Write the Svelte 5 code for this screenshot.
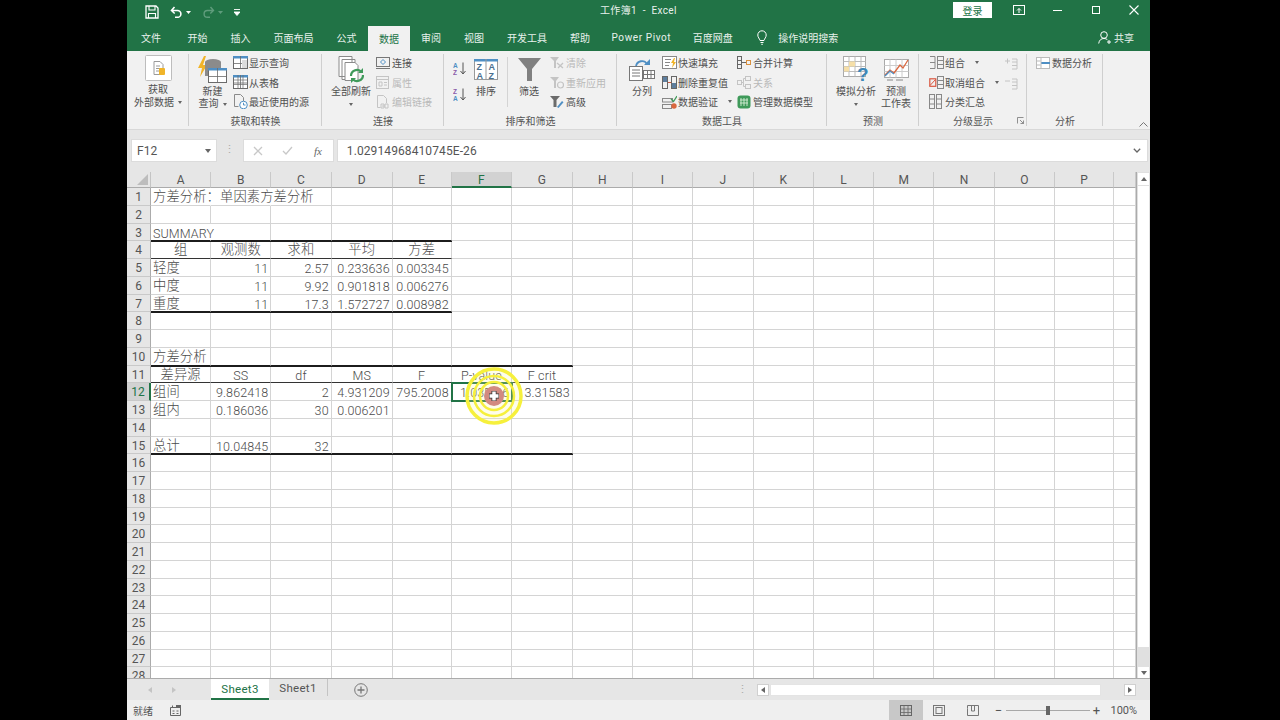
<script>
  const s = (w, h, b) => `<svg width="${w}" height="${h}" viewBox="0 0 ${w} ${h}" fill="none" xmlns="http://www.w3.org/2000/svg">${b}</svg>`;
  const G = '#6b6b6b', D = '#c4c4c4', B = '#4f8fc4', Y = '#f0b429', GR = '#3f9a5a';
  const table = (x, y, w, h, c = G, head = B) => `<rect x="${x + .5}" y="${y + .5}" width="${w - 1}" height="${h - 1}" stroke="${c}" fill="#fff"/><rect x="${x}" y="${y}" width="${w}" height="2.5" fill="${head}"/><path d="M${x} ${y + h / 2 + 1}H${x + w}M${x + w / 2} ${y}V${y + h}" stroke="${c}" stroke-width=".8"/>`;
  const icons = {
    save: s(14, 14, `<path d="M1 1h10l2 2v10H1z" stroke="#fff" stroke-width="1.3"/><path d="M4 1v4h6V1M3.5 13V8.5h7V13" stroke="#fff" stroke-width="1.1"/>`),
    undo: s(13, 12, `<path d="M4.5 1L1.5 4.5l3.2 3M2 4.5h5.5a3.4 3.4 0 0 1 0 6.8H5" stroke="#fff" stroke-width="1.6"/>`),
    redo: s(13, 12, `<path d="M8.5 1l3 3.5-3.2 3M11 4.5H5.5a3.4 3.4 0 0 0 0 6.8H8" stroke="#5f9c7c" stroke-width="1.4"/>`),
    caretw: s(5, 3, `<path d="M0 0h5L2.500 3z" fill="#fff"/>`),
    caretd: s(5, 3, `<path d="M0 0h5L2.500 3z" fill="#5f9c7c"/>`),
    custom: s(6, 7, `<path d="M0 .5h6M0 3h6L3 6.500z" stroke="#fff" stroke-width=".9" fill="#fff"/>`),
    display: s(12, 10, `<rect x=".5" y=".5" width="11" height="9" stroke="#fff"/><path d="M6 8V3.500M4 5.500l2-2 2 2" stroke="#fff"/>`),
    min: s(9, 1, `<rect width="9" height="1" fill="#fff"/>`),
    max: s(8, 8, `<rect x=".5" y=".5" width="7" height="7" stroke="#fff"/>`),
    close: s(10, 10, `<path d="M.5.5l9 9M9.500.5l-9 9" stroke="#fff" stroke-width="1.100"/>`),
    bulb: s(10, 15, `<path d="M3 10.500C2.500 8.500.8 7.500.8 5a4.200 4.200 0 0 1 8.400 0C9.200 7.500 7.500 8.500 7 10.500zM3.500 12.500h3M4.300 14.300h1.500" stroke="#fff"/>`),
    person: s(13, 13, `<circle cx="6" cy="4" r="3.300" stroke="#fff"/><path d="M.7 12.500c.5-3.500 2.500-5 5.300-5 1.500 0 2.500.4 3.400 1.200M9 11h4M11 9v4" stroke="#fff"/>`),
    ext: s(27, 26, `<rect x=".5" y=".5" width="26" height="25" fill="#fff" stroke="#bdbdbd" rx="1"/><path d="M9 6.500h6l3 3v10H9z" stroke="#9a9a9a" fill="#fff"/><path d="M11 11h4M11 13.500h4M11 16h3" stroke="#9a9a9a"/><rect x="14" y="13" width="6" height="7" rx="1" fill="${Y}"/>`),
    query: s(30, 28, `<path d="M6 0L0 12h4l-2 9 7-12H5l3-9z" fill="${Y}"/><ellipse cx="15" cy="6" rx="8" ry="3" fill="#8b8b8b"/><path d="M7 6v14h16V6" fill="#8b8b8b"/>${table(10, 12, 19, 15, G, B)}`),
    tshow: s(15, 13, `${table(0, 0, 15, 13)}<rect x="9" y="4" width="5" height="8" fill="#dcdcdc"/>`),
    ttable: s(15, 14, `${table(0, 0, 15, 14)}<path d="M5 0v14M10 0v14M0 5h15M0 9.500h15" stroke="${G}" stroke-width=".7"/>`),
    recent: s(15, 15, `<path d="M1.500.5h6l3 3v4M1.500.5v12h4" stroke="#8a8a8a"/><circle cx="10.500" cy="11" r="3.800" stroke="${B}" fill="#fff"/><path d="M10.500 8.800V11h2" stroke="${B}"/>`),
    refresh: s(26, 27, `<path d="M1 .5h13v20H1zM4 3.500h13v20H4z" stroke="#8a8a8a" fill="#fff"/><path d="M7 6.500h10l3 3v15H7z" stroke="#8a8a8a" fill="#fff"/><path d="M13 20a6 6 0 0 1 10-4.500M25 19a6 6 0 0 1-10 4.500" stroke="${GR}" stroke-width="2.200"/><path d="M25 12v5h-5zM13 27v-5h5z" fill="${GR}"/>`),
    conn: s(14, 12, `<rect x=".5" y=".5" width="13" height="9" stroke="#777"/><path d="M0 11.500h14" stroke="#777"/><path d="M7 2.500l2.500 2.500L7 7.500 4.500 5z" stroke="${B}"/>`),
    props: s(13, 13, `<rect x=".5" y=".5" width="12" height="12" stroke="${D}"/><path d="M.5 3.500h12M3 6h3v4H3zM8 6.500h3M8 9h3" stroke="${D}"/>`),
    editlink: s(13, 14, `<path d="M1.500.5h6l3 3V8M1.500.5v12h3" stroke="${D}"/><path d="M6 11h3M5 9h3v4H5zM9 9h3v4H9z" stroke="${D}"/>`),
    az: s(14, 13, `<text x="0" y="6" font-size="6.500" font-family="Liberation Sans" font-weight="700" fill="${B}">A</text><text x="0" y="12.500" font-size="6.500" font-family="Liberation Sans" font-weight="700" fill="#8a5aa8">Z</text><path d="M10 .5v11M7.500 9l2.500 3 2.500-3" stroke="#555"/>`),
    za: s(14, 13, `<text x="0" y="6" font-size="6.500" font-family="Liberation Sans" font-weight="700" fill="#8a5aa8">Z</text><text x="0" y="12.500" font-size="6.500" font-family="Liberation Sans" font-weight="700" fill="${B}">A</text><path d="M10 .5v11M7.500 9l2.500 3 2.500-3" stroke="#555"/>`),
    sort: s(24, 21, `<rect x=".5" y=".5" width="23" height="20" stroke="#999" fill="#fff"/><rect width="24" height="2.500" fill="${B}"/><path d="M12 0v21" stroke="#999"/><text x="2.500" y="11" font-size="9" font-family="Liberation Sans" font-weight="700" fill="#4a6f8f">Z</text><text x="2.500" y="19.500" font-size="9" font-family="Liberation Sans" font-weight="700" fill="#4a6f8f">A</text><text x="14.500" y="11" font-size="9" font-family="Liberation Sans" font-weight="700" fill="#4a6f8f">A</text><text x="14.500" y="19.500" font-size="9" font-family="Liberation Sans" font-weight="700" fill="#4a6f8f">Z</text>`),
    funnel: s(23, 23, `<path d="M0 0h23L14 11v12H9V11z" fill="#808080"/>`),
    clear: s(14, 13, `<path d="M0 1h9L6 5v7H4V5z" fill="${D}"/><path d="M7 7l6 5M13 7l-5 5" stroke="${D}" stroke-width="1.300"/>`),
    reapply: s(14, 13, `<path d="M0 1h9L6 5v7H4V5z" fill="${D}"/><circle cx="10.500" cy="9" r="3" stroke="${D}" stroke-width="1.200"/>`),
    adv: s(14, 13, `<path d="M0 1h10L6.500 5v7h-3V5z" fill="#6b6b6b"/><path d="M7 12l5-6 1.500 1.200-5 5.800z" fill="${B}"/>`),
    split: s(26, 23, `<path d="M7 8c1-5 8-7 11-2" stroke="${B}" stroke-width="1.800"/><path d="M15 7h6V1z" fill="${B}"/><rect x=".5" y="8.500" width="13" height="14" stroke="#777" fill="#fff"/><path d="M3 12h8M3 15h8M3 18h8" stroke="#777"/><rect x="14.500" y="12.500" width="11" height="8" stroke="#777" fill="#fff"/><path d="M14.500 16.500h11M18.500 12.500v8M22 12.500v8" stroke="#777"/>`),
    flash: s(15, 13, `<rect x=".5" y=".5" width="14" height="12" stroke="#888" fill="#fff"/><path d="M3 3.500h6M3 6.500h5M3 9.500h4" stroke="#888"/><path d="M12 2L9 7h2l-1 5 4-6h-2l1-4z" fill="${Y}"/>`),
    dedupe: s(15, 13, `<rect x=".5" y=".5" width="5" height="12" stroke="#666"/><rect x="9.500" y=".5" width="5" height="12" stroke="#666"/><rect x="1" y="1" width="4" height="5" fill="#5d7e9e"/><rect x="10" y="7" width="4" height="5" fill="#5d7e9e"/><path d="M6 6.500h3" stroke="#c9563f"/>`),
    valid: s(15, 14, `<rect x=".5" y="3.500" width="10" height="3.500" stroke="#888"/><rect x=".5" y="9.500" width="9" height="4" stroke="#888"/><path d="M9 4l2.500 2.500L15 1" stroke="${GR}" stroke-width="1.300"/><circle cx="12" cy="11" r="2.700" fill="#d9673f"/>`),
    consol: s(14, 13, `<rect x=".5" y=".5" width="4" height="12" stroke="#666"/><path d="M.5 4.500h4M.5 8.500h4M5 6.500h4" stroke="#666"/><rect x="9.500" y="4.500" width="4" height="4" stroke="#d9903f"/>`),
    rel: s(14, 13, `<g stroke="${D}"><rect x=".5" y="4.500" width="4" height="4"/><rect x="8.500" y=".5" width="5" height="4"/><rect x="8.500" y="8.500" width="5" height="4"/><path d="M4.500 6.500h2v-4h2M6.500 6.500v4h2"/></g>`),
    model: s(14, 14, `<rect x=".5" y=".5" width="13" height="13" rx="3" fill="${GR}"/><path d="M4 3v8M7 3v8M10 3v8M3 5h8M3 8h8" stroke="#d8efd8" stroke-width=".9"/>`),
    whatif: s(26, 28, `<rect x=".5" y=".5" width="22" height="20" stroke="#aaa" fill="#fff"/><path d="M6 .5v20M12 .5v20M18 .5v20M.5 5.500h22M.5 10.500h22M.5 15.500h22" stroke="#bbb"/><rect x="6" y="5.500" width="6" height="5" fill="#f6dfa8"/><rect x="1" y="10.500" width="5" height="5" fill="#f6dfa8"/><text x="14" y="25" font-size="19" font-family="Liberation Sans" font-weight="700" fill="#3d87b8">?</text>`),
    forecast: s(25, 22, `<rect x=".5" y=".5" width="24" height="18" stroke="#aaa" fill="#fff"/><path d="M6 .5v18M12 .5v18M18 .5v18M.5 6.500h24M.5 12.500h24" stroke="#ccc"/><path d="M1 16l5-5 4 3 6-8 3 3 5-8" stroke="#d9673f" stroke-width="1.300"/><path d="M1 17l5-5 4 3" stroke="${B}" stroke-width="1.300"/><path d="M3 21h6M12 21h7" stroke="#888"/>`),
    group: s(15, 13, `<rect x="8.500" y=".5" width="6" height="12" stroke="#888"/><path d="M8.500 4.500h6M8.500 8.500h6M1 .5h5M1 12.500h5M6 .5v12M1 6.500h5" stroke="#888"/>`),
    ungroup: s(15, 13, `<rect x="8.500" y=".5" width="6" height="12" stroke="#888"/><path d="M8.500 4.500h6M8.500 8.500h6" stroke="#888"/><rect x=".8" y="2.800" width="6" height="7.500" stroke="#d9563f" stroke-width="1.200"/><path d="M1 9.500l5.500-6" stroke="#d9563f"/>`),
    subtotal: s(13, 15, `<rect x=".5" y=".5" width="5" height="14" stroke="#888"/><rect x="7.500" y=".5" width="5" height="14" stroke="#888"/><path d="M.5 5h5M.5 10h5M7.500 5h5M7.500 10h5" stroke="#888"/>`),
    plusl: s(13, 12, `<path d="M0 3h5M2.500.5v5" stroke="${D}"/><path d="M7 1h5v10H7M7 4h5M7 7.500h5" stroke="${D}"/>`),
    minusl: s(13, 12, `<path d="M0 3h5" stroke="${D}"/><path d="M7 1h5v10H7M7 4h5M7 7.500h5" stroke="${D}"/>`),
    analysis: s(14, 12, `<rect x=".5" y=".5" width="13" height="11" stroke="#bbb" fill="#fff"/><path d="M5 6h9" stroke="${B}" stroke-width="2"/><path d="M5 .5v11M.5 4h4M.5 8h4" stroke="#bbb"/>`),
    launcher: s(7, 7, `<path d="M.5 6.500V.5h6M3 3l3.500 3.500M6.500 3.500v3h-3" stroke="#777" stroke-width=".8"/>`),
    collapse: s(9, 5, `<path d="M.5 4.500L4.500.5l4 4" stroke="#777"/>`),
    xmark: s(10, 10, `<path d="M1 1l8 8M9 1L1 9" stroke="#c8c8c8" stroke-width="1.300"/>`),
    check: s(11, 9, `<path d="M1 5l3 3 6-7" stroke="#c8c8c8" stroke-width="1.300"/>`),
    fx: s(14, 12, `<text x="1" y="10" font-size="11" font-style="italic" font-family="Liberation Serif" fill="#666">fx</text>`),
    chev: s(8, 5, `<path d="M.8.800L4 4 7.200.8" stroke="#666" stroke-width="1.300"/>`),
    plus: s(14, 14, `<circle cx="7" cy="7" r="6.300" stroke="#777"/><path d="M3.500 7h7M7 3.500v7" stroke="#777" stroke-width="1.300"/>`),
    macro: s(11, 11, `<path d="M.5 2.500h10v8H.5z" stroke="#666"/><path d="M2.500.5v2M2.500 6h2M6.500 6h2M2.500 8.500h2M6.500 8.500h2" stroke="#666"/><rect x="6" y="0" width="5" height="3" fill="#666"/>`),
    normal: s(12, 11, `<rect x=".5" y=".5" width="11" height="10" stroke="#666"/><path d="M4 .5v10M8 .5v10M.5 4h11M.5 7.500h11" stroke="#666" stroke-width=".8"/>`),
    page: s(12, 11, `<rect x=".5" y=".5" width="11" height="10" stroke="#777"/><rect x="3" y="2.500" width="6" height="6" stroke="#777"/>`),
    breakv: s(12, 11, `<path d="M.5 3.500V.5h11v10H.5zM4.500.5V6h3V.5" stroke="#777"/>`),
  };

  const colLetters = ['A','B','C','D','E','F','G','H','I','J','K','L','M','N','O','P',''];
  const L = (t) => ({ t, a: 'l' }), C = (t) => ({ t, a: 'c' }), R = (t) => ({ t, a: 'r' });
  const data = {
    1: [L('方差分析：单因素方差分析')],
    3: [L('SUMMARY')],
    4: [C('组'), C('观测数'), C('求和'), C('平均'), C('方差')],
    5: [L('轻度'), R('11'), R('2.57'), R('0.233636'), R('0.003345')],
    6: [L('中度'), R('11'), R('9.92'), R('0.901818'), R('0.006276')],
    7: [L('重度'), R('11'), R('17.3'), R('1.572727'), R('0.008982')],
    10: [L('方差分析')],
    11: [C('差异源'), C('SS'), C('df'), C('MS'), C('F'), C('P-value'), C('F crit')],
    12: [L('组间'), R('9.862418'), R('2'), R('4.931209'), R('795.2008'), R('1.03E-26'), R('3.31583')],
    13: [L('组内'), R('0.186036'), R('30'), R('0.006201')],
    15: [L('总计'), R('10.04845'), R('32')],
  };
  const rowNums = Array.from({ length: 28 }, (_, i) => i + 1);
  function cellClass(r, c) {
    const cell = data[r]?.[c];
    let k = 'cell ' + (cell ? 'a-' + cell.a : '');
    if (cell && /[^\x00-\x7f]/.test(cell.t)) k += ' cjk';
    if (((r === 3 || r === 7) && c < 5) || ((r === 10 || r === 15) && c < 7)) k += ' thick';
    if ((r === 4 && c < 5) || (r === 11 && c < 7)) k += ' thin';
    if ((r === 1 && c < 2) || (r === 3 && c === 0)) k += ' noright';
    if (r === 12 && c === 5) k += ' selected';
    return k;
  }
  const tabs = ['开始','插入','页面布局','公式'];
  const tabs2 = ['审阅','视图','开发工具','帮助','Power Pivot','百度网盘'];
</script>

{#snippet small(icon, text, off = false, caret = false)}
  <div class="small" class:off>
    <span class="si">{@html icons[icon]}</span>
    <span>{text}</span>
    {#if caret}<span class="caret"></span>{/if}
  </div>
{/snippet}

{#snippet big(icon, lines, cls, caret = false, inlineCaret = false)}
  <div class={'big ' + cls}>
    <div class="bi">{@html icons[icon]}</div>
    {#each lines as l, i}
      <div class="bl">{l}{#if inlineCaret && i === lines.length - 1}<span class="caret inl"></span>{/if}</div>
    {/each}
    {#if caret}<div class="bl"><span class="caret"></span></div>{/if}
  </div>
{/snippet}

<div class="window">
  <header class="titlebar">
    <div class="qat">
      <span class="q-save">{@html icons.save}</span>
      <span class="q-undo">{@html icons.undo}</span>
      <span class="q-c">{@html icons.caretw}</span>
      <span class="q-redo">{@html icons.redo}</span>
      <span class="q-c">{@html icons.caretd}</span>
      <span class="q-cust">{@html icons.custom}</span>
    </div>
    <div class="title">工作簿1 &nbsp;-&nbsp; Excel</div>
    <div class="wins">
      <button class="login">登录</button>
      <span class="slot">{@html icons.display}</span>
      <span class="slot">{@html icons.min}</span>
      <span class="slot">{@html icons.max}</span>
      <span class="slot last">{@html icons.close}</span>
    </div>
  </header>

  <nav class="tabs">
    <span class="tab first">文件</span>
    {#each tabs as t}<span class="tab">{t}</span>{/each}
    <span class="tab active">数据</span>
    {#each tabs2 as t}<span class="tab" class:latin={t === 'Power Pivot'}>{t}</span>{/each}
    <span class="search">{@html icons.bulb}<span>操作说明搜索</span></span>
    <span class="share">{@html icons.person}<span>共享</span></span>
  </nav>

  <section class="ribbon">
    <div class="group g1">
      <div class="body">{@render big('ext', ['获取', '外部数据'], 'w62 tight', false, true)}</div>
      <div class="label"></div>
    </div>
    <div class="group g2">
      <div class="body">
        {@render big('query', ['新建', '查询'], 'w41', false, true)}
        <div class="col">
          {@render small('tshow', '显示查询')}
          {@render small('ttable', '从表格')}
          {@render small('recent', '最近使用的源')}
        </div>
      </div>
      <div class="label">获取和转换</div>
    </div>
    <div class="group g3">
      <div class="body">
        {@render big('refresh', ['全部刷新'], 'w50', true)}
        <div class="col">
          {@render small('conn', '连接')}
          {@render small('props', '属性', true)}
          {@render small('editlink', '编辑链接', true)}
        </div>
      </div>
      <div class="label">连接</div>
    </div>
    <div class="group g4">
      <div class="body">
        <div class="sortcol"><span>{@html icons.az}</span><span>{@html icons.za}</span></div>
        {@render big('sort', ['排序'], 'w36')}
        <div class="vsep"></div>
        {@render big('funnel', ['筛选'], 'w38')}
        <div class="col c-filter">
          {@render small('clear', '清除', true)}
          {@render small('reapply', '重新应用', true)}
          {@render small('adv', '高级')}
        </div>
      </div>
      <div class="label">排序和筛选</div>
    </div>
    <div class="group g5">
      <div class="body">
        {@render big('split', ['分列'], 'w38')}
        <div class="col c-tools">
          {@render small('flash', '快速填充')}
          {@render small('dedupe', '删除重复值')}
          {@render small('valid', '数据验证', false, true)}
        </div>
        <div class="col">
          {@render small('consol', '合并计算')}
          {@render small('rel', '关系', true)}
          {@render small('model', '管理数据模型')}
        </div>
      </div>
      <div class="label">数据工具</div>
    </div>
    <div class="group g6">
      <div class="body">
        {@render big('whatif', ['模拟分析'], 'w50', true)}
        {@render big('forecast', ['预测', '工作表'], 'w30')}
      </div>
      <div class="label">预测</div>
    </div>
    <div class="group g7">
      <div class="body">
        <div class="col c-out">
          {@render small('group', '组合', false, true)}
          {@render small('ungroup', '取消组合', false, true)}
          {@render small('subtotal', '分类汇总')}
        </div>
        <div class="col c-right">
          <span class="ri">{@html icons.plusl}</span>
          <span class="ri">{@html icons.minusl}</span>
        </div>
      </div>
      <div class="label lab7"><span>分级显示</span><span class="launch">{@html icons.launcher}</span></div>
    </div>
    <div class="group g8">
      <div class="body"><div class="col">{@render small('analysis', '数据分析')}</div></div>
      <div class="label">分析</div>
    </div>
    <div class="rest"><span>{@html icons.collapse}</span></div>
  </section>

  <section class="formula">
    <div class="namebox"><span>F12</span><span class="nb-caret"></span></div>
    <div class="dots">⋮</div>
    <div class="fxbox">
      <span>{@html icons.xmark}</span><span>{@html icons.check}</span><span>{@html icons.fx}</span>
    </div>
    <div class="input"><span>1.02914968410745E-26</span><span class="chev">{@html icons.chev}</span></div>
  </section>

  <section class="sheet">
    <div class="grid">
      <div class="gridrow head">
        <div class="corner"><svg width="12" height="12" viewBox="0 0 12 12"><path d="M12 1v11H1z" fill="#bdbdbd"/></svg></div>
        {#each colLetters as l, i}<div class="colh" class:sel={i === 5}>{l}</div>{/each}
      </div>
      {#each rowNums as r}
        <div class="gridrow">
          <div class="rowh" class:sel={r === 12}>{r}</div>
          {#each colLetters as _, c}
            <div class={cellClass(r, c)}>
              {#if data[r]?.[c]}<span>{data[r][c].t}</span>{/if}
              {#if r === 12 && c === 5}
                <svg class="cursor" width="64" height="64" viewBox="0 0 64 64">
                  <circle cx="32" cy="32" r="27" stroke="#f6f03c" stroke-width="3.500" fill="#fbf7a0" fill-opacity=".22"/>
                  <circle cx="32" cy="32" r="20" stroke="#f6f03c" stroke-width="2.500" fill="none"/>
                  <circle cx="32" cy="32" r="14" stroke="#f6f03c" stroke-width="2.500" fill="none"/>
                  <circle cx="32" cy="32" r="10" fill="#d28a80"/>
                  <path d="M32 27v10M27 32h10" stroke="#333" stroke-width="5"/>
                  <path d="M32 27.500v9M27.500 32h9" stroke="#fff" stroke-width="3.500"/>
                </svg>
              {/if}
            </div>
          {/each}
        </div>
      {/each}
    </div>
    <aside class="vscroll">
      <div class="sbtn up"></div>
      <div class="vthumb"></div>
      <div class="sbtn down"></div>
    </aside>
  </section>

  <section class="sheettabs">
    <div class="nav"><span class="tri-l"></span><span class="tri-r"></span></div>
    <div class="stab on">Sheet3</div>
    <div class="stab">Sheet1</div>
    <div class="plus">{@html icons.plus}</div>
    <div class="tdots">⋮</div>
    <div class="hscroll">
      <div class="hbtn"><span class="tri-l dark"></span></div>
      <div class="hthumb"></div>
      <div class="hbtn r"><span class="tri-r dark"></span></div>
    </div>
  </section>

  <footer class="status">
    <span class="ready">就绪</span>
    <span class="macro">{@html icons.macro}</span>
    <div class="viewbtns">
      <span class="vb on">{@html icons.normal}</span>
      <span class="vb">{@html icons.page}</span>
      <span class="vb">{@html icons.breakv}</span>
    </div>
    <div class="zoom">
      <span class="zm">−</span>
      <div class="slider"><span class="knob"></span></div>
      <span class="zm">+</span>
      <span class="pct">100%</span>
    </div>
  </footer>
</div>

<style>
  :global(body) { margin: 0; background: #000; }
  .window {
    width: 1023px; height: 720px; margin-left: 127px; overflow: hidden;
    display: flex; flex-direction: column; background: #e6e6e6;
    font-family: Roboto, "Noto Sans CJK SC", sans-serif; color: #555;
  }
  .window :global(svg) { display: block; }

  .titlebar { height: 25px; background: #217346; display: flex; flex: none; color: #fff; box-sizing: border-box; }
  .qat { width: 473px; display: flex; align-items: center; padding: 0 0 1px 18px; box-sizing: border-box; }
  .q-undo { margin-left: 11px; }
  .q-c { margin-left: 3px; }
  .q-redo { margin-left: 11px; }
  .q-cust { margin-left: 11px; }
  .title { font-size: 10px; line-height: 21px; letter-spacing: .35px; color: #e8f1ec; }
  .wins { margin-left: auto; height: 20px; display: flex; align-items: center; }
  .login { width: 39px; height: 16px; margin-right: 8px; padding: 0; border: none; background: #fff; color: #217346; font: 10px "Noto Sans CJK SC", sans-serif; }
  .slot { width: 38.500px; display: flex; justify-content: center; }
  .slot.last { width: 34.500px; justify-content: flex-end; padding-right: 11px; box-sizing: border-box; }

  .tabs { height: 26px; background: #217346; display: flex; align-items: stretch; flex: none; font-size: 10px; color: #e8f1ec; }
  .tab { padding: 0 11.500px 2px; display: flex; align-items: center; white-space: nowrap; }
  .tab.first { padding: 0 15px 2px 14px; }
  .tab.active { background: #f1f1f1; color: #217346; margin-top: 1px; padding: 0 10.500px 1px 11px; }
  .tab.latin { letter-spacing: .6px; padding: 0 10px 2px; }
  .search { display: flex; align-items: center; gap: 11px; margin-left: 13px; padding-bottom: 2px; }
  .share { display: flex; align-items: center; gap: 3px; margin-left: auto; margin-right: 16px; padding-bottom: 2px; }

  .ribbon { height: 79px; background: #f1f1f1; border-bottom: 1px solid #d8d8d8; box-sizing: border-box; display: flex; flex: none; font-size: 10px; color: #505050; }
  .group { display: flex; flex-direction: column; box-sizing: border-box; position: relative; }
  .group::after { content: ""; position: absolute; right: 0; top: 3px; bottom: 3px; width: 1px; background: #cfcfcf; }
  .body { height: 61px; padding-top: 2px; box-sizing: border-box; display: flex; flex: none; }
  .label { flex: 1; display: flex; justify-content: center; align-items: center; line-height: 1; padding-top: 3px; color: #555; }
  .g1 { width: 62px; } .g2 { width: 133px; } .g3 { width: 122px; } .g4 { width: 173px; }
  .g5 { width: 210px; } .g6 { width: 92px; } .g7 { width: 108px; } .g8 { width: 76px; }
  .g2 .body { padding-left: 3px; } .g3 .body { padding-left: 4px; } .g4 .body { padding-left: 9px; }
  .g5 .body { padding-left: 6px; } .g6 .body { padding-left: 4px; } .g7 .body { padding-left: 10px; } .g8 .body { padding-left: 9px; }
  .rest { flex: 1; display: flex; justify-content: flex-end; align-items: flex-end; padding: 0 2px 2px 0; }

  .big { display: flex; flex-direction: column; align-items: center; flex: none; white-space: nowrap; }
  .bi { height: 33px; display: flex; align-items: center; justify-content: center; }
  .bl { height: 12px; line-height: 12px; display: flex; align-items: center; justify-content: center; }
  .tight .bi { height: 30px; }
  .tight .bl { height: 13px; line-height: 13px; }
  .w62 { width: 62px; } .w41 { width: 41px; } .w50 { width: 50px; } .w36 { width: 36px; } .w38 { width: 38px; } .w30 { width: 30px; }

  .col { display: flex; flex-direction: column; flex: none; }
  .small { height: 19.500px; display: flex; align-items: center; white-space: nowrap; }
  .small.off { color: #b9b9b9; }
  .si { width: 16px; display: flex; flex: none; }
  .caret { display: inline-block; width: 0; height: 0; border: 2.500px solid transparent; border-top: 3px solid #666; border-bottom: 0; margin-left: 10px; }
  .bl .caret { margin: 0; }
  .bl .caret.inl { margin-left: 4px; }

  .sortcol { width: 15px; padding-top: 9px; display: flex; flex-direction: column; gap: 13px; flex: none; }
  .vsep { width: 1px; height: 50px; background: #d4d4d4; margin: 4px 2px 0 3px; flex: none; }
  .c-filter { margin-left: 2px; }
  .c-tools { width: 75px; margin-left: 1px; }
  .c-out { width: 76px; }
  .c-right { gap: 8px; padding-top: 5px; }
  .ri { display: block; }
  .lab7 { position: relative; }
  .launch { position: absolute; right: 3px; bottom: 5px; }

  .formula { height: 42px; flex: none; box-sizing: border-box; padding: 9px 2px 10px 4px; display: flex; font-size: 12px; }
  .namebox, .fxbox, .input { background: #fff; border: 1px solid #dcdcdc; box-sizing: border-box; display: flex; align-items: center; }
  .namebox { width: 86px; padding: 0 5px 0 5px; justify-content: space-between; }
  .nb-caret { border: 3px solid transparent; border-top: 4px solid #666; border-bottom: 0; }
  .dots { width: 26px; text-align: center; line-height: 21px; color: #aaa; font-size: 11px; }
  .fxbox { width: 91px; padding: 0 6px 0 9px; justify-content: space-between; }
  .input { width: 812px; margin-left: 3px; padding: 0 6px 0 9px; justify-content: space-between; letter-spacing: .1px; }

  .sheet { height: 506px; flex: none; display: flex; overflow: hidden; }
  .grid { width: 1009px; background: #fff; border-right: 1px solid #ababab; box-sizing: content-box; overflow: hidden; font-size: 12px; font-weight: 300; }
  .gridrow {
    display: grid; height: 17.750px; grid-template-rows: 17.750px;
    grid-template-columns: 24px 60.300px 60px 60.400px 61px 59px 60.500px 60.500px 60px 60.300px 60.600px 60.400px 60px 60.300px 60.400px 60.600px 58.700px 22px;
  }
  .gridrow.head { height: 16px; grid-template-rows: 16px; background: #e6e6e6; font-weight: 400; }
  .corner { display: flex; align-items: flex-end; justify-content: flex-end; padding: 0 2px 2px 0; box-sizing: border-box; border-right: 1px solid #c4c4c4; border-bottom: 1px solid #ababab; }
  .colh { text-align: center; line-height: 17px; overflow: hidden; border-right: 1px solid #c9c9c9; border-bottom: 1px solid #ababab; box-sizing: border-box; }
  .colh.sel { background: #d2d2d2; border-bottom: 2px solid #217346; color: #217346; }
  .rowh { background: #e6e6e6; text-align: center; line-height: 19px; border-right: 1px solid #ababab; border-bottom: 1px solid #c9c9c9; box-sizing: border-box; font-weight: 400; overflow: hidden; }
  .rowh.sel { background: #d2d2d2; border-right: 2px solid #217346; color: #217346; }
  .cell {
    box-sizing: border-box; position: relative; white-space: nowrap;
    border-right: 1px solid #d4d4d4; border-bottom: 1px solid #d4d4d4;
    padding: 0 2px; color: #4a4a4a; font-size: 12.500px;
    display: flex;
  }
  .cell > span { line-height: 19px; height: 19px; flex: none; letter-spacing: .1px; }
  .cell.cjk { font-size: 13.300px; }
  .cell.cjk > span { line-height: 18px; height: 18px; }
  .a-l { justify-content: flex-start; }
  .a-c { justify-content: center; }
  .a-r { justify-content: flex-end; }
  .thick { border-bottom: 1px solid #1c1c1c; box-shadow: 0 1px 0 #1c1c1c; z-index: 1; }
  .thin { border-bottom: 1px solid #333; }
  .noright { border-right-color: transparent; }
  .selected { outline: 2px solid #217346; outline-offset: -1px; z-index: 2; }
  .cursor { position: absolute; left: 10px; top: -19px; overflow: visible; z-index: 3; }

  .vscroll { width: 13px; display: flex; flex-direction: column; align-items: center; background: #e0e0e0; }
  .sbtn { width: 11px; height: 12px; background: #fff; flex: none; display: flex; align-items: center; justify-content: center; margin-top: 1px; }
  .sbtn::after { content: ""; border: 3.500px solid transparent; }
  .up::after { border-bottom: 4px solid #666; border-top: 0; }
  .down::after { border-top: 4px solid #666; border-bottom: 0; }
  .vthumb { width: 11px; height: 461px; margin-top: 1px; background: #fff; margin-bottom: 19px; flex: none; }

  .sheettabs { height: 22px; flex: none; display: flex; align-items: stretch; border-top: 1px solid #ababab; box-sizing: border-box; font-size: 11.500px; }
  .nav { width: 84px; display: flex; align-items: center; gap: 20px; padding-left: 21px; box-sizing: border-box; }
  .tri-l, .tri-r { display: block; width: 0; height: 0; border: 3.500px solid transparent; }
  .tri-l { border-right: 4px solid #c4c4c4; border-left: 0; }
  .tri-r { border-left: 4px solid #c4c4c4; border-right: 0; }
  .tri-l.dark { border-right-color: #666; } .tri-r.dark { border-left-color: #666; }
  .stab { width: 58px; display: flex; align-items: center; justify-content: center; position: relative; letter-spacing: .3px; }
  .stab.on { background: #fff; color: #217346; border-bottom: 2px solid #217346; box-sizing: border-box; }
  .stab:not(.on) { border-right: 1px solid #c4c4c4; margin: 0 0 4px; }
  .plus { width: 66px; display: flex; align-items: center; justify-content: center; }
  .tdots { width: 29px; margin-left: 334px; display: flex; align-items: center; justify-content: center; color: #aaa; font-size: 11px; }
  .hscroll { display: flex; align-items: center; flex: none; }
  .hbtn { width: 12px; height: 12px; background: #fff; border: 1px solid #d0d0d0; box-sizing: border-box; display: flex; align-items: center; justify-content: center; }
  .hbtn.r { margin-left: 23px; }
  .hthumb { width: 331px; height: 12px; background: #fff; margin-left: 1px; border: 1px solid #e4e4e4; box-sizing: border-box; }

  .status { height: 20px; flex: none; background: #efefef; display: flex; align-items: center; font-size: 10px; border-top: 0; }
  .ready { margin-left: 6px; }
  .macro { margin-left: 17px; }
  .viewbtns { margin-left: 708px; display: flex; align-self: stretch; }
  .vb { width: 33.500px; display: flex; align-items: center; justify-content: center; }
  .vb.on { background: #c8c8c8; }
  .zoom { display: flex; align-items: center; margin-left: 4px; }
  .zm { width: 10px; text-align: center; font-size: 13px; line-height: 1; }
  .slider { width: 84px; height: 1px; background: #a8a8a8; margin: 0 2px; position: relative; }
  .knob { position: absolute; left: 40px; top: -4px; width: 4px; height: 9px; background: #666; }
  .pct { margin-left: 9px; font-size: 11px; }
</style>
